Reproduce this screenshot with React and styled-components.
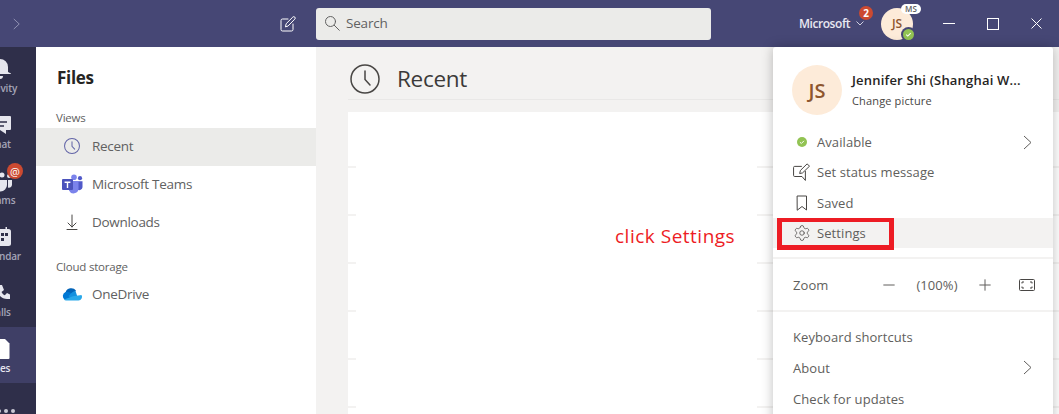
import styled, { createGlobalStyle } from "styled-components";
import { Settings } from "lucide-react";

const GlobalStyle = createGlobalStyle`
  html, body {
    margin: 0;
    padding: 0;
    height: 414px;
    overflow: hidden;
    background: #fff;
    font-family: "Open Sans", "Noto Sans", sans-serif;
  }
  * { box-sizing: border-box; }
`;

const Page = styled.div`
  position: relative;
  width: 1059px;
  height: 414px;
  overflow: hidden;
  display: flex;
  flex-direction: column;
`;

// Title bar
const TitleBar = styled.header`
  height: 47px;
  flex: none;
  background: #464775;
  display: flex;
  align-items: center;
  color: #fff;
`;
const Collapse = styled.div`
  width: 264px;
  padding-left: 13px;
  display: flex;
  align-items: center;
`;
const Compose = styled.div`
  width: 52px;
  padding-left: 16px;
  display: flex;
  align-items: center;
`;
const SearchBox = styled.div`
  width: 395px;
  height: 32px;
  background: #ebebe9;
  border-radius: 3px;
  display: flex;
  align-items: center;
  gap: 6px;
  padding: 0 0 1px 8px;
  font-size: 13.5px;
  letter-spacing: -0.2px;
  color: #616161;
`;
const Tenant = styled.div`
  margin-left: 88px;
  width: 82px;
  display: flex;
  align-items: center;
  position: relative;
  font-size: 12px;
  font-weight: 600;
  letter-spacing: -0.45px;
  color: #e8e8f2;
  gap: 6px;
`;
const TenantBadge = styled.span`
  position: absolute;
  left: 60px;
  top: -9px;
  width: 14px;
  height: 14px;
  border-radius: 50%;
  background: #cc4a31;
  color: #fff;
  font-size: 10px;
  font-weight: 700;
  letter-spacing: 0;
  display: flex;
  align-items: center;
  justify-content: center;
`;
const UserAvatar = styled.div`
  position: relative;
  width: 32px;
  height: 32px;
  border-radius: 50%;
  background: #fdebd9;
  color: #8e562e;
  font-size: 12px;
  font-weight: 600;
  display: flex;
  align-items: center;
  justify-content: center;
`;
const OrgPill = styled.span`
  position: absolute;
  left: 20px;
  top: -4px;
  width: 20px;
  height: 10px;
  border-radius: 5px;
  background: #fff;
  color: #616161;
  font-size: 8px;
  line-height: 10px;
  font-weight: 600;
  text-align: center;
`;
const PresenceRing = styled.span`
  position: absolute;
  left: 20px;
  top: 19px;
  width: 15px;
  height: 15px;
  border-radius: 50%;
  background: #464775;
  display: flex;
  align-items: center;
  justify-content: center;
`;
const WindowControls = styled.div`
  margin-left: 30px;
  display: flex;
  align-items: center;
  gap: 32px;
`;

// Body
const Body = styled.div`
  flex: 1;
  min-height: 0;
  display: flex;
`;

const Rail = styled.nav`
  width: 36px;
  flex: none;
  background: #2f2f4a;
  overflow: hidden;
`;
const RailItem = styled.div`
  position: relative;
  width: 36px;
  height: 56px;
  overflow: hidden;
  background: ${(p) => (p.$active ? "#3f3f66" : "transparent")};
`;
const RailInner = styled.div`
  width: 68px;
  margin-left: -34px;
  display: flex;
  flex-direction: column;
  align-items: center;
`;
const RailIcon = styled.div`
  height: 34px;
  padding-top: 9px;
  display: flex;
  justify-content: center;
`;
const RailLabel = styled.div`
  font-size: 10px;
  line-height: 14px;
  font-weight: 600;
  letter-spacing: -0.2px;
  color: ${(p) => (p.$active ? "#e6e6f0" : "#a5a5b8")};
`;
const RailBadge = styled.span`
  position: absolute;
  left: 7px;
  top: 4px;
  width: 16px;
  height: 16px;
  border-radius: 50%;
  background: #cc4a31;
  color: #fff;
  font-size: 11px;
  font-weight: 400;
  display: flex;
  align-items: center;
  justify-content: center;
`;
const MoreDots = styled.div`
  height: 56px;
  display: flex;
  align-items: center;
  gap: 3px;
  margin-left: -3px;
`;
const Dot = styled.span`
  width: 4px;
  height: 4px;
  border-radius: 50%;
  background: #c8c8d4;
`;

// Files list
const FilesPanel = styled.aside`
  width: 280px;
  flex: none;
  background: #fff;
  padding-top: 20px;
`;
const FilesTitle = styled.h1`
  margin: 0 0 0 21px;
  font-size: 17px;
  line-height: 22px;
  font-weight: 700;
  letter-spacing: -0.3px;
  color: #252423;
`;
const GroupLabel = styled.div`
  margin: ${(p) => p.$top}px 0 0 20px;
  height: ${(p) => p.$h}px;
  font-size: 11.5px;
  line-height: 16px;
  letter-spacing: -0.2px;
  color: #616161;
`;
const FileRow = styled.div`
  height: 38px;
  display: flex;
  align-items: center;
  padding: 0 0 2px 25px;
  gap: 9px;
  font-size: 13.5px;
  letter-spacing: -0.3px;
  color: #616161;
  background: ${(p) => (p.$active ? "#ebebe9" : "transparent")};
`;
const FileIcon = styled.span`
  width: 22px;
  display: flex;
  justify-content: center;
`;

// Main area
const Main = styled.main`
  flex: 1;
  min-width: 0;
  background: #f3f2f1;
  padding-left: 32px;
  display: flex;
  flex-direction: column;
`;
const MainHeader = styled.div`
  height: 53px;
  flex: none;
  display: flex;
  align-items: center;
  gap: 17px;
  padding: 11px 0 0 2px;
  border-bottom: 1px solid #e9e8e7;
  font-size: 22.5px;
  letter-spacing: -0.3px;
  color: #3b3a39;
`;
const Content = styled.div`
  flex: 1;
  margin-top: 12px;
  padding-top: 8px;
  background: #fff;
`;
const GridRow = styled.div`
  height: 48px;
  display: flex;
  align-items: flex-end;
`;
const Stub = styled.span`
  height: 2px;
  background: #f3f2f1;
  width: ${(p) => p.$w}px;
  margin-left: ${(p) => p.$gap || 0}px;
`;

// Profile menu
const Menu = styled.div`
  position: absolute;
  left: 773px;
  top: 47px;
  width: 280px;
  height: 380px;
  background: #fff;
  border-radius: 3px 3px 0 0;
  box-shadow: 0 0 12px rgba(0, 0, 0, 0.26);
  padding-top: 18px;
  color: #484644;
`;
const Profile = styled.div`
  height: 50px;
  margin-left: 19px;
  display: flex;
  align-items: center;
  gap: 10px;
`;
const BigAvatar = styled.div`
  width: 50px;
  height: 50px;
  border-radius: 50%;
  background: #fdebd9;
  color: #8e562e;
  font-size: 20px;
  font-weight: 600;
  display: flex;
  align-items: center;
  justify-content: center;
`;
const ProfileName = styled.div`
  font-size: 13px;
  line-height: 17px;
  font-weight: 600;
  letter-spacing: 0.2px;
  color: #252423;
  margin-top: -1px;
`;
const ProfileSub = styled.div`
  font-size: 11px;
  line-height: 15px;
  margin-top: 4px;
  letter-spacing: 0.15px;
  color: #484644;
`;
const MenuList = styled.div`
  margin-top: ${(p) => p.$top || 0}px;
`;
const MenuRow = styled.div`
  height: ${(p) => p.$h || 30.33}px;
  display: flex;
  align-items: center;
  padding: 0 21px 0 20px;
  font-size: 13px;
  letter-spacing: 0.08px;
  color: #605e5c;
  background: ${(p) => (p.$active ? "#f3f2f1" : "transparent")};
`;
const MenuIcon = styled.span`
  width: 22px;
  flex: none;
  display: flex;
  align-items: center;
  justify-content: center;
  margin: 0 4px 0 -2px;
`;
const Grow = styled.span`
  flex: 1;
`;
const Separator = styled.div`
  height: 2px;
  background: #f3f2f1;
  margin-top: ${(p) => p.$top}px;
`;
const ZoomControls = styled.div`
  margin-left: auto;
  display: flex;
  align-items: center;
  color: #605e5c;
`;
const ZoomValue = styled.span`
  width: 84px;
  text-align: center;
`;
const FitIcon = styled.svg`
  margin: 0 -3px 0 28px;
`;

// Tutorial annotations painted on the screenshot
const Note = styled.div`
  position: absolute;
  left: 615px;
  top: 223px;
  font-size: 19px;
  line-height: 26px;
  letter-spacing: 0.5px;
  color: #ed1c24;
`;
const Highlight = styled.div`
  position: absolute;
  left: 777px;
  top: 218px;
  width: 117px;
  height: 32px;
  border: 4px solid #ed1c24;
  border-width: 4px 5px 5px 5px;
`;

const Stroke = ({ size = 16, color = "currentColor", children }) => (
  <svg
    width={size}
    height={size}
    viewBox="0 0 16 16"
    fill="none"
    stroke={color}
    strokeWidth={16 / size}
    strokeLinecap="round"
    strokeLinejoin="round"
  >
    {children}
  </svg>
);

const Chevron = ({ color = "#605e5c", w = 9, h = 15 }) => (
  <svg width={w} height={h} viewBox="0 0 9 15" fill="none" stroke={color} strokeWidth="1">
    <path d="M1 1l7 6.5L1 14" />
  </svg>
);

const ClockIcon = ({ size, color, sw }) => (
  <svg width={size} height={size} viewBox="0 0 30 30" fill="none" stroke={color} strokeWidth={sw}>
    <circle cx="15" cy="15" r="14" />
    <path d="M15 7v8.5l5 5.5" strokeLinecap="round" />
  </svg>
);

const TeamsLogo = () => (
  <svg width="21" height="20" viewBox="0 0 21 20">
    <circle cx="12" cy="3.2" r="2.8" fill="#7b83eb" />
    <circle cx="18" cy="4.2" r="2.1" fill="#5059c9" />
    <path d="M15.5 7.2h5v6a3.2 3.2 0 0 1-5 2.4z" fill="#5059c9" />
    <path d="M7 7h9.5v8a5 5 0 0 1-9.5 1.5z" fill="#7b83eb" />
    <rect x="0" y="5" width="11" height="11" rx="1" fill="#4b53bc" />
    <path d="M2.6 7.6h5.8v1.3H6.2v5H4.8v-5H2.6z" fill="#fff" />
  </svg>
);

const OneDriveLogo = () => (
  <svg width="21" height="14" viewBox="0 0 21 14">
    <path d="M7 9.5L3.500 5.500A6 6 0 0 1 14 3.600l-3 3.200z" fill="#0364b8" />
    <path d="M7 5.200a4.200 4.200 0 0 0-3.400-.1A4.400 4.400 0 0 0 3 13h6L13.500 8z" fill="#0078d4" />
    <path d="M13.500 4a5 5 0 0 0-3.500 1.500L6.500 9l4 4h6z" fill="#1490df" />
    <path d="M2 12.500A2.900 2.900 0 0 0 4 13.500H16.500a3.600 3.600 0 0 0 3-5.500L11 9.200z" fill="#28a8ea" />
  </svg>
);

const PresenceDot = ({ size = 12 }) => (
  <svg width={size} height={size} viewBox="0 0 12 12">
    <circle cx="6" cy="6" r="6" fill="#92c353" />
    <path d="M3.5 6.200l1.700 1.600 3.200-3.200" fill="none" stroke="#fff" strokeWidth="1.100" />
  </svg>
);

// rail icons share a 24px box, the middle of it sits on the window's left edge
const RailSvg = ({ children }) => (
  <svg width="24" height="24" viewBox="0 0 24 24" fill="#e6e6ee">
    {children}
  </svg>
);

const railItems = [
  {
    label: "Activity",
    icon: (
      <RailSvg>
        <path d="M12 3a8 8 0 0 1 8 8v5l3 1.500V18H1v-.5L4 16v-5a8 8 0 0 1 8-8z" />
        <path d="M9 20h6a3 3 0 0 1-6 0z" />
      </RailSvg>
    ),
  },
  {
    label: "Chat",
    icon: (
      <RailSvg>
        <path d="M3 4h19a1 1 0 0 1 1 1v12a1 1 0 0 1-1 1h-4v4l-6-4H3a2 2 0 0 1-2-2V5a1 1 0 0 1 2-1z" />
        <path d="M7 10h12M7 14h9" stroke="#2f2f4a" strokeWidth="1.300" fill="none" />
      </RailSvg>
    ),
  },
  {
    label: "Teams",
    badge: "@",
    icon: (
      <RailSvg>
        <circle cx="14" cy="7" r="2.500" />
        <circle cx="21" cy="8" r="2" />
        <path d="M6 12h13v5a6 6 0 0 1-13 0z" />
        <path d="M20 12h4v5a3 3 0 0 1-4 2.500z" />
      </RailSvg>
    ),
  },
  {
    label: "Calendar",
    icon: (
      <RailSvg>
        <rect x="1" y="5" width="22" height="17" rx="2.500" />
        <path d="M5 3h1.500v3H5zM17.500 3H19v3h-1.500z" />
        <path d="M13 9h3v3h-3zM17 9h3v3h-3zM13 14h3v3h-3z" fill="#2f2f4a" />
      </RailSvg>
    ),
  },
  {
    label: "Calls",
    icon: (
      <RailSvg>
        <path d="M9 5h5l2 5-2.500 2c.800 1.500 1.800 2.500 3.300 3.300L19 13l3 1.500V19h-3C13 19 8 13 8 7z" />
      </RailSvg>
    ),
  },
  {
    label: "Files",
    active: true,
    icon: (
      <RailSvg>
        <path d="M3 3h14l4.500 4.500V22a1 1 0 0 1-1 1H3z" fill="#fff" />
      </RailSvg>
    ),
  },
];

const rows = [0, 1, 2, 3, 4, 5];

export default function App() {
  return (
    <Page>
      <GlobalStyle />
      <TitleBar>
        <Collapse>
          <Chevron color="#a6a6c4" w={7} h={12} />
        </Collapse>
        <Compose>
          <Stroke size={16} color="#fff">
            <path d="M8 3H2.500A1.500 1.500 0 0 0 1 4.500v9A1.500 1.500 0 0 0 2.500 15h9a1.500 1.500 0 0 0 1.500-1.500V8" />
            <path d="M5.500 10.500l.7-2.800L12.800 1.100a1.200 1.200 0 0 1 2 2L8.300 9.800z" />
          </Stroke>
        </Compose>
        <SearchBox>
          <Stroke size={16} color="#616161">
            <circle cx="6.500" cy="6.500" r="5" />
            <path d="M10.300 10.300l5 5" />
          </Stroke>
          Search
        </SearchBox>
        <Tenant>
          Microsoft
          <svg width="8" height="5" viewBox="0 0 8 5" fill="none" stroke="#cfcfe0">
            <path d="M.5.500L4 4l3.500-3.500" />
          </svg>
          <TenantBadge>2</TenantBadge>
        </Tenant>
        <UserAvatar>
          JS
          <OrgPill>MS</OrgPill>
          <PresenceRing>
            <PresenceDot size={11} />
          </PresenceRing>
        </UserAvatar>
        <WindowControls>
          <svg width="12" height="12" viewBox="0 0 12 12" stroke="#fff" strokeWidth="1">
            <path d="M0 5.500h12" />
          </svg>
          <svg width="12" height="12" viewBox="0 0 12 12" fill="none" stroke="#fff" strokeWidth="1">
            <rect x=".5" y=".5" width="11" height="11" />
          </svg>
          <svg width="11" height="11" viewBox="0 0 11 11" stroke="#fff" strokeWidth="1">
            <path d="M.5.500l10 10M10.500.500l-10 10" />
          </svg>
        </WindowControls>
      </TitleBar>

      <Body>
        <Rail>
          {railItems.map((item) => (
            <RailItem key={item.label} $active={item.active}>
              <RailInner>
                <RailIcon>{item.icon}</RailIcon>
                <RailLabel $active={item.active}>{item.label}</RailLabel>
              </RailInner>
              {item.badge && <RailBadge>{item.badge}</RailBadge>}
            </RailItem>
          ))}
          <MoreDots>
            <Dot />
            <Dot />
            <Dot />
          </MoreDots>
        </Rail>

        <FilesPanel>
          <FilesTitle>Files</FilesTitle>
          <GroupLabel $top={21} $h={18}>
            Views
          </GroupLabel>
          <FileRow $active>
            <FileIcon>
              <ClockIcon size={16} color="#6264a7" sw={1.9} />
            </FileIcon>
            Recent
          </FileRow>
          <FileRow>
            <FileIcon>
              <TeamsLogo />
            </FileIcon>
            Microsoft Teams
          </FileRow>
          <FileRow>
            <FileIcon>
              <Stroke size={16} color="#484644">
                <path d="M8 1v12M4 9l4 4 4-4M3 15.500h10" />
              </Stroke>
            </FileIcon>
            Downloads
          </FileRow>
          <GroupLabel $top={17} $h={17}>
            Cloud storage
          </GroupLabel>
          <FileRow>
            <FileIcon>
              <OneDriveLogo />
            </FileIcon>
            OneDrive
          </FileRow>
        </FilesPanel>

        <Main>
          <MainHeader>
            <ClockIcon size={30} color="#484644" sw={1.5} />
            Recent
          </MainHeader>
          <Content>
            {rows.map((r) => (
              <GridRow key={r}>
                <Stub $w={8} />
                <Stub $w={302} $gap={401} />
              </GridRow>
            ))}
          </Content>
        </Main>
      </Body>

      <Note>click Settings</Note>

      <Menu>
        <Profile>
          <BigAvatar>JS</BigAvatar>
          <div>
            <ProfileName>Jennifer Shi (Shanghai W...</ProfileName>
            <ProfileSub>Change picture</ProfileSub>
          </div>
        </Profile>
        <MenuList $top={12}>
          <MenuRow>
            <MenuIcon>
              <PresenceDot size={10} />
            </MenuIcon>
            Available
            <Grow />
            <Chevron />
          </MenuRow>
          <MenuRow>
            <MenuIcon>
              <Stroke size={18} color="#484644">
                <path d="M7.500 3H1.500a1 1 0 0 0-1 1v7a1 1 0 0 0 1 1H8l3 3.500V7.500" />
                <path d="M6 9l.6-2.400L12.500.8l2.200 2-6 5.800z" />
              </Stroke>
            </MenuIcon>
            Set status message
          </MenuRow>
          <MenuRow>
            <MenuIcon>
              <Stroke size={16} color="#484644">
                <path d="M3.500 1h9v14L8 11.500 3.500 15z" />
              </Stroke>
            </MenuIcon>
            Saved
          </MenuRow>
          <MenuRow $active>
            <MenuIcon>
              <Settings size={18} strokeWidth={1} color="#484644" />
            </MenuIcon>
            Settings
          </MenuRow>
        </MenuList>
        <Separator $top={9} />
        <MenuList>
          <MenuRow $h={51}>
            Zoom
            <ZoomControls>
              <Stroke size={12} color="#605e5c">
                <path d="M1 8h14" />
              </Stroke>
              <ZoomValue>(100%)</ZoomValue>
              <Stroke size={12} color="#605e5c">
                <path d="M1 8h14M8 1v14" />
              </Stroke>
              <FitIcon width="16" height="12" viewBox="0 0 16 12" fill="none" stroke="#484644">
                <rect x=".5" y=".5" width="15" height="11" rx="1" />
                <path d="M3 4.500V3h2M11 3h2v1.500M13 7.500V9h-2M5 9H3V7.500" />
              </FitIcon>
            </ZoomControls>
          </MenuRow>
        </MenuList>
        <Separator $top={0} />
        <MenuList $top={9}>
          <MenuRow $h={31}>Keyboard shortcuts</MenuRow>
          <MenuRow $h={31}>
            About
            <Grow />
            <Chevron />
          </MenuRow>
          <MenuRow $h={31}>Check for updates</MenuRow>
        </MenuList>
      </Menu>

      <Highlight />
    </Page>
  );
}
